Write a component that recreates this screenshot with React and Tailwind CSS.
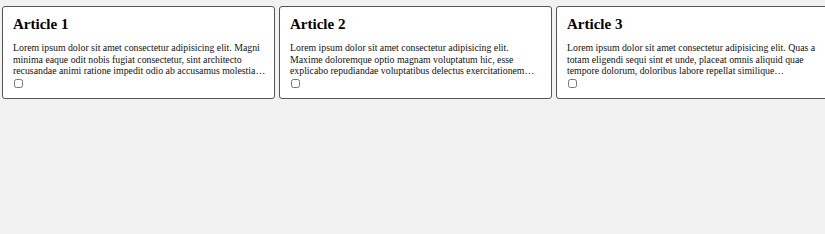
import React from 'react'

const ARTICLES = [
  {
    id: 1,
    title: 'Article 1',
    body: 'Lorem ipsum dolor sit amet consectetur adipisicing elit. Magni minima eaque odit nobis fugiat consectetur, sint architecto recusandae animi ratione impedit odio ab accusamus molestiae quibusdam, voluptas dolorum.',
  },
  {
    id: 2,
    title: 'Article 2',
    body: 'Lorem ipsum dolor sit amet consectetur adipisicing elit. Maxime doloremque optio magnam voluptatum hic, esse explicabo repudiandae voluptatibus delectus exercitationem nostrum, quae eveniet tempora.',
  },
  {
    id: 3,
    title: 'Article 3',
    body: 'Lorem ipsum dolor sit amet consectetur adipisicing elit. Quas a totam eligendi sequi sint et unde, placeat omnis aliquid quae tempore dolorum, doloribus labore repellat similique exercitationem natus.',
  },
]

function ArticleCard({ article }) {
  return (
    <div className="w-[273px] h-[93px] shrink-0 bg-white border border-[#555] rounded-[3px] pl-[10px] pr-[8px] pt-[8px] overflow-hidden">
      <h2 className="text-[15px] leading-[18px] font-bold text-black">{article.title}</h2>
      <p className="mt-[9px] text-[9.8px] leading-[11.5px] text-[#111] line-clamp-3">{article.body}</p>
      <input type="checkbox" className="block ml-[1px] mt-[2px] w-[9px] h-[9px] m-0" />
    </div>
  )
}

export default function App() {
  return (
    <div className="min-h-[234px] bg-[#f2f2f2] overflow-hidden" style={{ fontFamily: '"Liberation Serif", "Times New Roman", serif' }}>
      <div className="flex gap-[4px] pt-[6px] pl-[2px]">
        {ARTICLES.map(a => (
          <ArticleCard key={a.id} article={a} />
        ))}
      </div>
    </div>
  )
}
